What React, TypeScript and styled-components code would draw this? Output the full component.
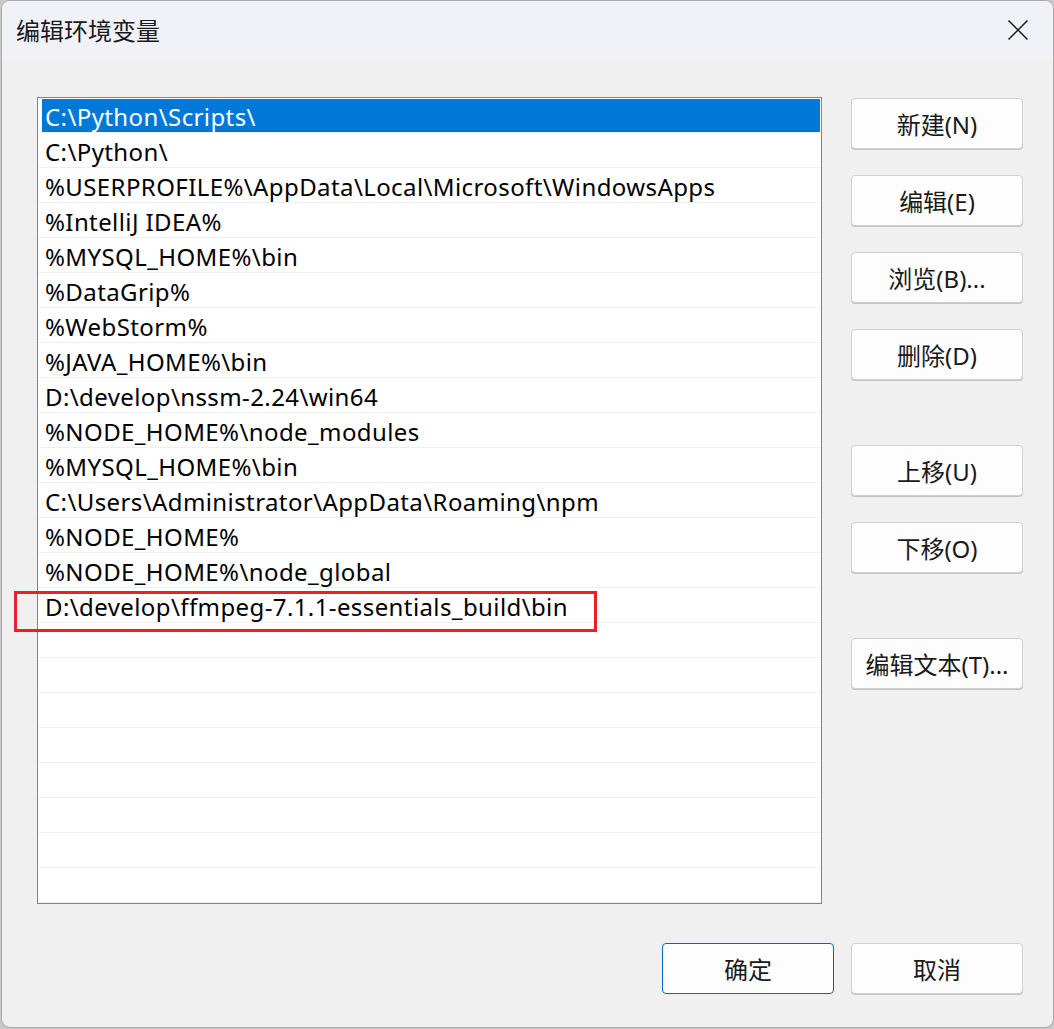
import React from "react";
import styled, { createGlobalStyle } from "styled-components";

const GlobalStyle = createGlobalStyle`
  html, body {
    margin: 0;
    padding: 0;
    background: #c9c9c9;
  }
  #root {
    width: 1054px;
    height: 1029px;
  }
`;

const paths = [
  "C:\\Python\\Scripts\\",
  "C:\\Python\\",
  "%USERPROFILE%\\AppData\\Local\\Microsoft\\WindowsApps",
  "%IntelliJ IDEA%",
  "%MYSQL_HOME%\\bin",
  "%DataGrip%",
  "%WebStorm%",
  "%JAVA_HOME%\\bin",
  "D:\\develop\\nssm-2.24\\win64",
  "%NODE_HOME%\\node_modules",
  "%MYSQL_HOME%\\bin",
  "C:\\Users\\Administrator\\AppData\\Roaming\\npm",
  "%NODE_HOME%",
  "%NODE_HOME%\\node_global",
  "D:\\develop\\ffmpeg-7.1.1-essentials_build\\bin",
];

const TOTAL_ROWS = 23;

const FONT = `"Noto Sans", "Noto Sans CJK SC", sans-serif`;

export default function App() {
  const rows = Array.from({ length: TOTAL_ROWS }, (_, i) => paths[i] ?? "");

  return (
    <>
      <GlobalStyle />
      <Window>
        <TitleBar>
          <Title>编辑环境变量</Title>
          <CloseButton aria-label="close">
            <svg width="22" height="22" viewBox="0 0 22 22">
              <path d="M1.5 1.5 L20.5 20.5 M20.5 1.5 L1.5 20.5" stroke="#1a1a1a" strokeWidth="1.5" fill="none" />
            </svg>
          </CloseButton>
        </TitleBar>
        <Body>
          <Main>
            <ListBox>
              {rows.map((text, i) => (
                <Row key={i}>
                  <RowText $selected={i === 0}>{text}</RowText>
                </Row>
              ))}
            </ListBox>
            <SideButtons>
              <ButtonGroup>
                <Button>新建(N)</Button>
                <Button>编辑(E)</Button>
                <Button>浏览(B)...</Button>
                <Button>删除(D)</Button>
              </ButtonGroup>
              <ButtonGroup>
                <Button>上移(U)</Button>
                <Button>下移(O)</Button>
              </ButtonGroup>
              <ButtonGroup>
                <Button>编辑文本(T)...</Button>
              </ButtonGroup>
            </SideButtons>
          </Main>
          <Footer>
            <Button $primary>确定</Button>
            <Button>取消</Button>
          </Footer>
        </Body>
        <Highlight />
      </Window>
    </>
  );
}

const Window = styled.div`
  position: relative;
  box-sizing: border-box;
  margin-left: 1px;
  width: 1053px;
  height: 1028px;
  border: 1px solid #a9a9a9;
  border-radius: 9px;
  background: #f0f0f0;
  overflow: hidden;
  display: flex;
  flex-direction: column;
  font-family: ${FONT};
  color: #000;
`;

const TitleBar = styled.div`
  height: 57px;
  flex-shrink: 0;
  background: #f1f2f8;
  display: flex;
  align-items: center;
  justify-content: space-between;
  padding: 0 14px 0 14px;
`;

const Title = styled.div`
  font-family: "Noto Sans CJK SC", sans-serif;
  font-size: 24px;
  color: #1a1a1a;
`;

const CloseButton = styled.div`
  width: 22px;
  height: 22px;
  display: flex;
  margin-top: 1px;
  margin-right: 10px;
`;

const Body = styled.div`
  flex: 1;
  display: flex;
  flex-direction: column;
  padding: 39px 30px 0 35px;
`;

const Main = styled.div`
  display: flex;
  gap: 29px;
  align-items: flex-start;
`;

const ListBox = styled.div`
  box-sizing: border-box;
  width: 785px;
  height: 807px;
  border: 1px solid #838383;
  background: #fff;
  overflow: hidden;
`;

const Row = styled.div`
  box-sizing: border-box;
  height: 35px;
  padding-left: 4px;
  border-bottom: 1px solid #efefef;
  display: flex;
  align-items: stretch;
`;

const RowText = styled.div<{ $selected?: boolean }>`
  flex: 1;
  display: flex;
  align-items: center;
  padding: 2px 0 0 3px;
  font-size: 24px;
  letter-spacing: 0.4px;
  white-space: nowrap;
  background: ${({ $selected }) => ($selected ? "#0078d7" : "transparent")};
  color: ${({ $selected }) => ($selected ? "#fff" : "#000")};
  margin-top: ${({ $selected }) => ($selected ? "1px" : "0")};
  margin-right: 1px;
`;

const SideButtons = styled.div`
  display: flex;
  flex-direction: column;
  gap: 65px;
  padding-top: 1px;
`;

const ButtonGroup = styled.div`
  display: flex;
  flex-direction: column;
  gap: 26px;
`;

const Button = styled.div<{ $primary?: boolean }>`
  box-sizing: border-box;
  width: 172px;
  height: 51px;
  border-radius: 4px;
  background: #fdfdfd;
  border: 1px solid ${({ $primary }) => ($primary ? "#0067c0" : "#d0d0d0")};
  box-shadow: ${({ $primary }) => ($primary ? "none" : "0 1px 0 #c4c4c4")};
  display: flex;
  align-items: center;
  justify-content: center;
  font-size: 24px;
  color: #1a1a1a;
`;

const Footer = styled.div`
  display: flex;
  justify-content: flex-end;
  gap: 17px;
  margin-top: 39px;
`;

const Highlight = styled.div`
  position: absolute;
  left: 12px;
  top: 590px;
  width: 583px;
  height: 41px;
  box-sizing: border-box;
  border: 3px solid #e8202a;
  pointer-events: none;
`;
